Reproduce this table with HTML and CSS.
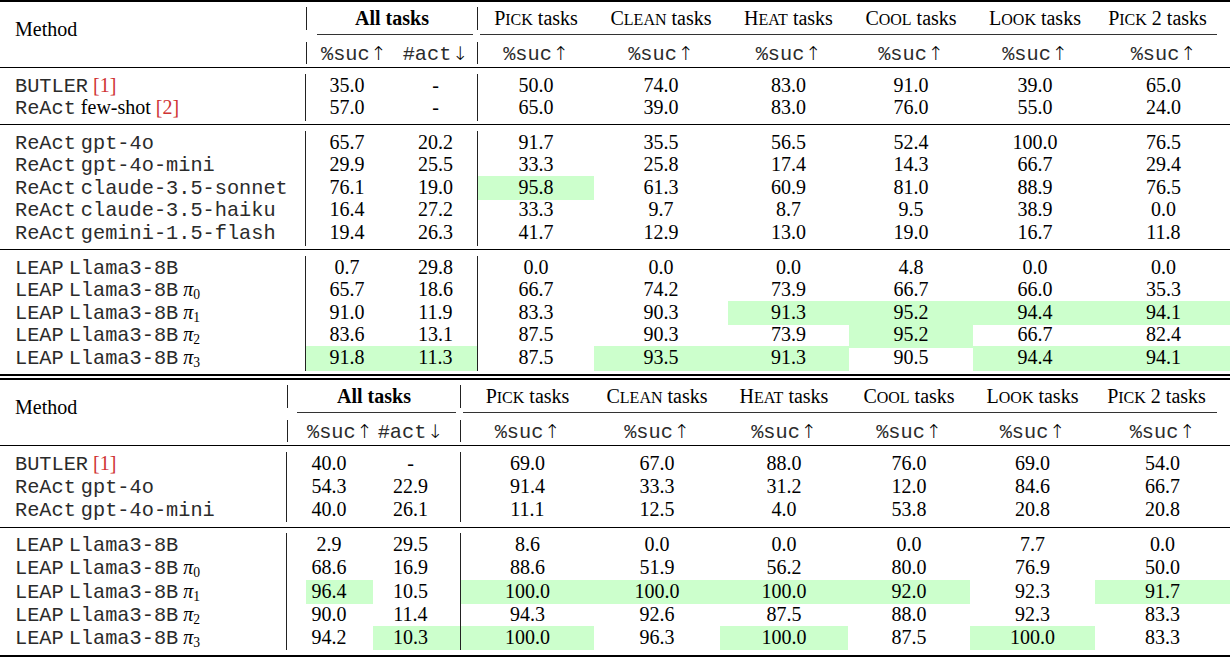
FILE: index.html
```html
<!DOCTYPE html>
<html>
<head>
<meta charset="utf-8">
<link rel="stylesheet" href="styles.css">
</head>
<body>
<div class="page">

<section class="tbl t1">
  <div class="rule-top"></div>
  <div class="head">
    <div class="hm">Method</div>
    <div class="hg g-all">All tasks</div>
    <div class="hg g-k">P<span class="sc">ICK</span> tasks</div>
    <div class="hg">C<span class="sc">LEAN</span> tasks</div>
    <div class="hg">H<span class="sc">EAT</span> tasks</div>
    <div class="hg">C<span class="sc">OOL</span> tasks</div>
    <div class="hg">L<span class="sc">OOK</span> tasks</div>
    <div class="hg last">P<span class="sc">ICK</span> 2 tasks</div>
    <div class="cm cm-all"></div>
    <div class="cm cm-tasks"></div>
    <div class="hs hs-s"><span class="tt">%suc</span><span class="ar">↑</span></div>
    <div class="hs hs-a"><span class="tt">#act</span><span class="ar">↓</span></div>
    <div class="hs hs-k"><span class="tt">%suc</span><span class="ar">↑</span></div>
    <div class="hs"><span class="tt">%suc</span><span class="ar">↑</span></div>
    <div class="hs"><span class="tt">%suc</span><span class="ar">↑</span></div>
    <div class="hs"><span class="tt">%suc</span><span class="ar">↑</span></div>
    <div class="hs"><span class="tt">%suc</span><span class="ar">↑</span></div>
    <div class="hs"><span class="tt">%suc</span><span class="ar">↑</span></div>
  </div>
  <div class="rule-mid"></div>
  <div class="grp">
    <div class="row"><div class="c m"><span class="tt">BUTLER</span> <span class="cite">[1]</span></div><div class="c s">35.0</div><div class="c a">-</div><div class="c k">50.0</div><div class="c">74.0</div><div class="c">83.0</div><div class="c">91.0</div><div class="c">39.0</div><div class="c">65.0</div></div>
    <div class="row"><div class="c m"><span class="tt">ReAct</span> few-shot <span class="cite">[2]</span></div><div class="c s">57.0</div><div class="c a">-</div><div class="c k">65.0</div><div class="c">39.0</div><div class="c">83.0</div><div class="c">76.0</div><div class="c">55.0</div><div class="c">24.0</div></div>
  </div>
  <div class="rule-mid"></div>
  <div class="grp">
    <div class="row"><div class="c m"><span class="tt">ReAct</span> <span class="tt">gpt-4o</span></div><div class="c s">65.7</div><div class="c a">20.2</div><div class="c k">91.7</div><div class="c">35.5</div><div class="c">56.5</div><div class="c">52.4</div><div class="c">100.0</div><div class="c">76.5</div></div>
    <div class="row"><div class="c m"><span class="tt">ReAct</span> <span class="tt">gpt-4o-mini</span></div><div class="c s">29.9</div><div class="c a">25.5</div><div class="c k">33.3</div><div class="c">25.8</div><div class="c">17.4</div><div class="c">14.3</div><div class="c">66.7</div><div class="c">29.4</div></div>
    <div class="row"><div class="c m"><span class="tt">ReAct</span> <span class="tt">claude-3.5-sonnet</span></div><div class="c s">76.1</div><div class="c a">19.0</div><div class="c k hi">95.8</div><div class="c">61.3</div><div class="c">60.9</div><div class="c">81.0</div><div class="c">88.9</div><div class="c">76.5</div></div>
    <div class="row"><div class="c m"><span class="tt">ReAct</span> <span class="tt">claude-3.5-haiku</span></div><div class="c s">16.4</div><div class="c a">27.2</div><div class="c k">33.3</div><div class="c">9.7</div><div class="c">8.7</div><div class="c">9.5</div><div class="c">38.9</div><div class="c">0.0</div></div>
    <div class="row"><div class="c m"><span class="tt">ReAct</span> <span class="tt">gemini-1.5-flash</span></div><div class="c s">19.4</div><div class="c a">26.3</div><div class="c k">41.7</div><div class="c">12.9</div><div class="c">13.0</div><div class="c">19.0</div><div class="c">16.7</div><div class="c">11.8</div></div>
  </div>
  <div class="rule-mid"></div>
  <div class="grp">
    <div class="row"><div class="c m"><span class="tt">LEAP</span> <span class="tt">Llama3-8B</span></div><div class="c s">0.7</div><div class="c a">29.8</div><div class="c k">0.0</div><div class="c">0.0</div><div class="c">0.0</div><div class="c">4.8</div><div class="c">0.0</div><div class="c">0.0</div></div>
    <div class="row"><div class="c m"><span class="tt">LEAP</span> <span class="tt">Llama3-8B</span> <i>π</i><sub>0</sub></div><div class="c s">65.7</div><div class="c a">18.6</div><div class="c k">66.7</div><div class="c">74.2</div><div class="c">73.9</div><div class="c">66.7</div><div class="c">66.0</div><div class="c">35.3</div></div>
    <div class="row"><div class="c m"><span class="tt">LEAP</span> <span class="tt">Llama3-8B</span> <i>π</i><sub>1</sub></div><div class="c s">91.0</div><div class="c a">11.9</div><div class="c k">83.3</div><div class="c">90.3</div><div class="c hi">91.3</div><div class="c hi">95.2</div><div class="c hi">94.4</div><div class="c hi">94.1</div></div>
    <div class="row"><div class="c m"><span class="tt">LEAP</span> <span class="tt">Llama3-8B</span> <i>π</i><sub>2</sub></div><div class="c s">83.6</div><div class="c a">13.1</div><div class="c k">87.5</div><div class="c">90.3</div><div class="c">73.9</div><div class="c hi">95.2</div><div class="c">66.7</div><div class="c">82.4</div></div>
    <div class="row"><div class="c m"><span class="tt">LEAP</span> <span class="tt">Llama3-8B</span> <i>π</i><sub>3</sub></div><div class="c s hi">91.8</div><div class="c a hi">11.3</div><div class="c k">87.5</div><div class="c hi">93.5</div><div class="c hi">91.3</div><div class="c">90.5</div><div class="c hi">94.4</div><div class="c hi">94.1</div></div>
  </div>
  <div class="rule-bot"></div>
</section>

<section class="tbl t2">
  <div class="rule-top"></div>
  <div class="head">
    <div class="hm">Method</div>
    <div class="hg g-all">All tasks</div>
    <div class="hg g-k">P<span class="sc">ICK</span> tasks</div>
    <div class="hg">C<span class="sc">LEAN</span> tasks</div>
    <div class="hg">H<span class="sc">EAT</span> tasks</div>
    <div class="hg">C<span class="sc">OOL</span> tasks</div>
    <div class="hg">L<span class="sc">OOK</span> tasks</div>
    <div class="hg last">P<span class="sc">ICK</span> 2 tasks</div>
    <div class="cm cm-all"></div>
    <div class="cm cm-tasks"></div>
    <div class="hs hs-s"><span class="tt">%suc</span><span class="ar">↑</span></div>
    <div class="hs hs-a"><span class="tt">#act</span><span class="ar">↓</span></div>
    <div class="hs hs-k"><span class="tt">%suc</span><span class="ar">↑</span></div>
    <div class="hs"><span class="tt">%suc</span><span class="ar">↑</span></div>
    <div class="hs"><span class="tt">%suc</span><span class="ar">↑</span></div>
    <div class="hs"><span class="tt">%suc</span><span class="ar">↑</span></div>
    <div class="hs"><span class="tt">%suc</span><span class="ar">↑</span></div>
    <div class="hs"><span class="tt">%suc</span><span class="ar">↑</span></div>
  </div>
  <div class="rule-mid"></div>
  <div class="grp">
    <div class="row"><div class="c m"><span class="tt">BUTLER</span> <span class="cite">[1]</span></div><div class="c s">40.0</div><div class="c a">-</div><div class="c k">69.0</div><div class="c">67.0</div><div class="c">88.0</div><div class="c">76.0</div><div class="c">69.0</div><div class="c">54.0</div></div>
    <div class="row"><div class="c m"><span class="tt">ReAct</span> <span class="tt">gpt-4o</span></div><div class="c s">54.3</div><div class="c a">22.9</div><div class="c k">91.4</div><div class="c">33.3</div><div class="c">31.2</div><div class="c">12.0</div><div class="c">84.6</div><div class="c">66.7</div></div>
    <div class="row"><div class="c m"><span class="tt">ReAct</span> <span class="tt">gpt-4o-mini</span></div><div class="c s">40.0</div><div class="c a">26.1</div><div class="c k">11.1</div><div class="c">12.5</div><div class="c">4.0</div><div class="c">53.8</div><div class="c">20.8</div><div class="c">20.8</div></div>
  </div>
  <div class="rule-mid"></div>
  <div class="grp">
    <div class="row"><div class="c m"><span class="tt">LEAP</span> <span class="tt">Llama3-8B</span></div><div class="c s">2.9</div><div class="c a">29.5</div><div class="c k">8.6</div><div class="c">0.0</div><div class="c">0.0</div><div class="c">0.0</div><div class="c">7.7</div><div class="c">0.0</div></div>
    <div class="row"><div class="c m"><span class="tt">LEAP</span> <span class="tt">Llama3-8B</span> <i>π</i><sub>0</sub></div><div class="c s">68.6</div><div class="c a">16.9</div><div class="c k">88.6</div><div class="c">51.9</div><div class="c">56.2</div><div class="c">80.0</div><div class="c">76.9</div><div class="c">50.0</div></div>
    <div class="row"><div class="c m"><span class="tt">LEAP</span> <span class="tt">Llama3-8B</span> <i>π</i><sub>1</sub></div><div class="c s hi">96.4</div><div class="c a">10.5</div><div class="c k hi">100.0</div><div class="c hi">100.0</div><div class="c hi">100.0</div><div class="c hi">92.0</div><div class="c">92.3</div><div class="c hi">91.7</div></div>
    <div class="row"><div class="c m"><span class="tt">LEAP</span> <span class="tt">Llama3-8B</span> <i>π</i><sub>2</sub></div><div class="c s">90.0</div><div class="c a">11.4</div><div class="c k">94.3</div><div class="c">92.6</div><div class="c">87.5</div><div class="c">88.0</div><div class="c">92.3</div><div class="c">83.3</div></div>
    <div class="row"><div class="c m"><span class="tt">LEAP</span> <span class="tt">Llama3-8B</span> <i>π</i><sub>3</sub></div><div class="c s">94.2</div><div class="c a hi">10.3</div><div class="c k hi">100.0</div><div class="c">96.3</div><div class="c hi">100.0</div><div class="c">87.5</div><div class="c hi">100.0</div><div class="c">83.3</div></div>
  </div>
  <div class="rule-bot"></div>
</section>

</div>
</body>
</html>
```

FILE: styles.css
```css
* {
  box-sizing: border-box;
  margin: 0;
  padding: 0;
}

body {
  background: #fff;
  color: #000;
  font-family: "Liberation Serif", "Times New Roman", serif;
  font-size: 20px;
}

.page {
  width: 1230px;
  display: flex;
  flex-direction: column;
}

.tbl {
  display: flex;
  flex-direction: column;
}

.t1 {
  --cols: 306px 68px 103px 117px 134px 121px 124px 124px 133px;
  --rh: 22.6px;
}

.t2 {
  --cols: 287px 86px 87px 134px 126px 128px 122px 125px 135px;
  --rh: 23.2px;
  margin-top: 2px;
}

.rule-top,
.rule-bot {
  height: 2px;
  background: #000;
}

.rule-mid {
  height: 1px;
  background: #000;
}

/* header */
.head {
  display: grid;
  grid-template-columns: var(--cols);
  grid-template-rows: 32px 1px 32px;
}

.hm {
  grid-column: 1;
  grid-row: 1 / 4;
  align-self: start;
  padding: 16px 0 0 15px;
  line-height: 22px;
}

.hg {
  grid-row: 1;
  margin: 5px 0 4px;
  line-height: 23px;
  text-align: center;
  white-space: nowrap;
}

.g-all {
  grid-column: 2 / 4;
  font-weight: bold;
  border-left: 1px solid #222;
}

.g-k {
  border-left: 1px solid #222;
}

.hg.last {
  padding-right: 12px;
}

.sc {
  font-size: 0.8em;
}

.cm {
  grid-row: 2;
  height: 1px;
  background: #333;
}

.cm-all {
  grid-column: 2 / 4;
  margin: 0 4px 0 11px;
}

.t2 .cm-all {
  margin: 0 4px 0 10px;
}

.cm-tasks {
  grid-column: 4 / 10;
  margin: 0 13px 0 3px;
}

.hs {
  grid-row: 3;
  margin: 7px 0 3px;
  line-height: 22px;
  text-align: center;
  white-space: nowrap;
}

.hs-s,
.hs-k {
  border-left: 1px solid #222;
}

.t1 .hs-s {
  padding-left: 14px;
}

.t1 .hs-a {
  padding-left: 20px;
}

.t2 .hs-s {
  padding-left: 19px;
  padding-right: 21px;
}

.t2 .hs-a {
  padding-right: 12px;
}

.tt {
  font-family: "Liberation Mono", "Courier New", monospace;
  font-size: 20.3px;
  color: #2b2b2b;
}

.ar {
  font-family: "DejaVu Sans", sans-serif;
  font-weight: 200;
  font-size: 19px;
  color: #000;
  margin-left: 1px;
}

/* body rows */
.grp {
  padding: 5.5px 0;
}

.row {
  display: grid;
  grid-template-columns: var(--cols);
  height: var(--rh);
  line-height: var(--rh);
}

.c {
  text-align: center;
  white-space: nowrap;
}

.m {
  text-align: left;
  padding-left: 15px;
  border-right: 1px solid #222;
}

.k {
  border-left: 1px solid #222;
}

.hi {
  background: #ccffcc;
}

.t1 .s {
  padding-left: 14px;
}

.t1 .a {
  padding-left: 20px;
}

.t2 .s {
  margin-left: 19px;
  padding-right: 21px;
}

.t2 .a {
  padding-right: 12px;
}

.cite {
  color: #cf3333;
}

sub {
  font-size: 0.68em;
  vertical-align: -0.25em;
  line-height: 0;
}
```
